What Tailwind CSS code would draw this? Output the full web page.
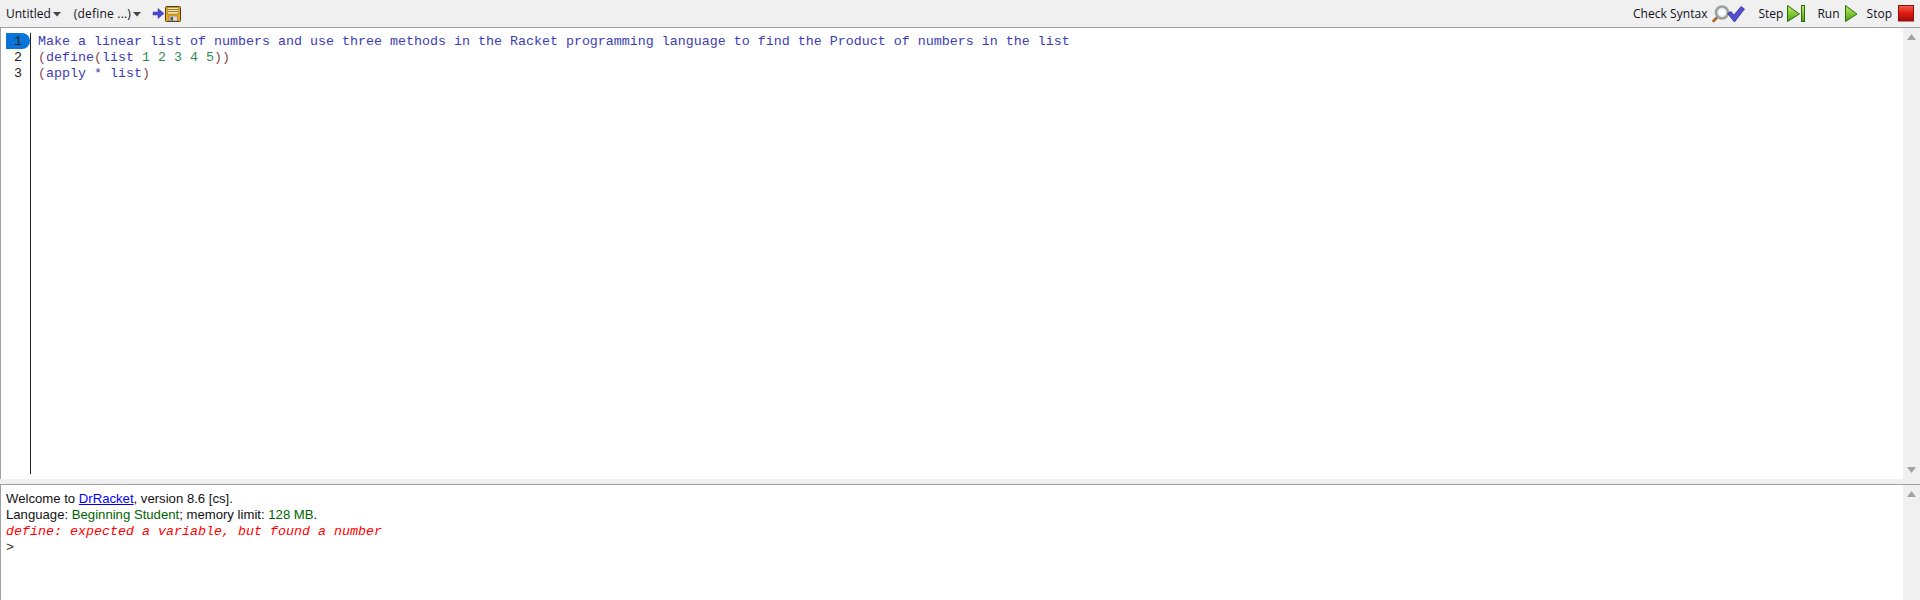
<!doctype html>
<html>
<head>
<meta charset="utf-8">
<script src="https://cdn.jsdelivr.net/npm/@tailwindcss/browser@4"></script>
</head>
<body class="m-0 bg-[#f0f0f0]">
<div class="w-[1920px] h-[600px] overflow-hidden flex flex-col bg-[#f0f0f0] text-black">
  <!-- toolbar -->
  <div class="h-[27px] flex items-center justify-between shrink-0 font-['Open_Sans',sans-serif] text-[12px] text-[#10101c]">
    <div class="flex items-center pl-[6px]">
      <span>Untitled</span>
      <svg class="ml-[2px] mt-[1px]" width="9" height="5" viewBox="0 0 9 5"><path d="M0 0H8L4 4.500Z" fill="#444"/></svg>
      <span class="ml-[12px] tracking-[0.2px]">(define ...)</span>
      <svg class="ml-[2px] mt-[1px]" width="9" height="5" viewBox="0 0 9 5"><path d="M0 0H8L4 4.500Z" fill="#444"/></svg>
      <svg class="ml-[10px]" width="30" height="18" viewBox="0 0 30 18">
        <path d="M1 7H6V3.500L12 8.500L6 13.500V10H1Z" fill="#4a4ad0" stroke="#3030a0" stroke-width=".5"/>
        <rect x="13.500" y="1.500" width="15" height="15" rx="1" fill="#e8a820" stroke="#5a3c08"/>
        <rect x="15.500" y="2.500" width="11" height="6.500" fill="#f6e4a8" stroke="#8a6a20" stroke-width=".5"/>
        <path d="M16 4.500H26M16 6.500H26" stroke="#9a7a30" stroke-width="1"/>
        <rect x="17" y="11" width="8.500" height="5" fill="#d8d8d8" stroke="#706040" stroke-width=".5"/>
        <rect x="18.500" y="12" width="2.500" height="3.500" fill="#555"/>
      </svg>
    </div>
    <div class="flex items-center pr-[6px]">
      <span class="tracking-[0.05px]">Check Syntax</span>
      <svg class="ml-[4px]" width="33" height="18" viewBox="0 0 33 18">
        <path d="M5 12.500L1.500 16" stroke="#b06020" stroke-width="2.500" stroke-linecap="round"/>
        <circle cx="10" cy="7.500" r="6" fill="#e8ecec" stroke="#9aa09e" stroke-width="2.500"/>
        <circle cx="10" cy="7.500" r="3" fill="#fff"/>
        <path d="M15.500 8.500L19 6.500L22 10L29 1.500L32.500 4L22.500 17Z" fill="#5050d0" stroke="#2a2a80" stroke-width=".7"/>
      </svg>
      <span class="ml-[14px]">Step</span>
      <svg class="ml-[4px]" width="18" height="18" viewBox="0 0 18 18">
        <defs><linearGradient id="g1" x1="0" y1="0" x2="0" y2="1"><stop offset="0" stop-color="#b8f060"/><stop offset="1" stop-color="#4ea010"/></linearGradient></defs>
        <path d="M.5 .5L12.500 9L.5 16.500Z" fill="url(#g1)" stroke="#2e6a10"/>
        <rect x="14.500" y=".5" width="3" height="16" fill="url(#g1)" stroke="#2e6a10"/>
      </svg>
      <span class="ml-[12px]">Run</span>
      <svg class="ml-[5px]" width="13" height="18" viewBox="0 0 13 18">
        <path d="M.5 .5L12 9L.5 16.500Z" fill="url(#g1)" stroke="#2e6a10"/>
      </svg>
      <span class="ml-[9px]">Stop</span>
      <svg class="ml-[6px]" width="16" height="18" viewBox="0 0 16 18">
        <defs><linearGradient id="g2" x1="0" y1="0" x2="0" y2="1"><stop offset="0" stop-color="#f06050"/><stop offset=".5" stop-color="#e01810"/><stop offset="1" stop-color="#a00c08"/></linearGradient></defs>
        <rect x=".5" y=".5" width="15" height="15.500" fill="url(#g2)" stroke="#8a1008"/>
      </svg>
    </div>
  </div>
  <div class="h-[1px] bg-[#a0a0a0] shrink-0"></div>

  <!-- definitions -->
  <div class="h-[451px] shrink-0 flex bg-white border-l border-[#a0a0a0]">
    <div class="w-[30px] shrink-0 border-r border-[#222] mt-[5px] mb-[5px] flex flex-col items-end font-['Liberation_Mono',monospace] text-[13.33px] leading-[18px] text-[#222]">
      <div class="w-[24px] h-[16px] bg-[#0a74d8] rounded-r-[8px] text-right pr-[8px]">1</div>
      <div class="h-[16px] pr-[8px]">2</div>
      <div class="h-[16px] pr-[8px]">3</div>
    </div>
    <div class="flex-1 pl-[7px] pt-[6px] font-['Liberation_Mono',monospace] text-[13.33px] leading-[16px] text-[#3c3cb4]">
      <div class="whitespace-pre">Make a linear list of numbers and use three methods in the Racket programming language to find the Product of numbers in the list</div>
      <div class="whitespace-pre"><span class="text-[#8e4b4b]">(</span>define<span class="text-[#8e4b4b]">(</span>list <span class="text-[#2e8b57]">1</span> <span class="text-[#2e8b57]">2</span> <span class="text-[#2e8b57]">3</span> <span class="text-[#2e8b57]">4</span> <span class="text-[#2e8b57]">5</span><span class="text-[#8e4b4b]">))</span></div>
      <div class="whitespace-pre"><span class="text-[#8e4b4b]">(</span>apply * list<span class="text-[#8e4b4b]">)</span></div>
    </div>
    <div class="w-[17px] shrink-0 bg-[#f0f0f0] flex flex-col justify-between items-center py-[6px]">
      <svg width="9" height="6" viewBox="0 0 9 6"><path d="M4.500 0L9 6H0Z" fill="#a3a3a3"/></svg>
      <svg width="9" height="6" viewBox="0 0 9 6"><path d="M0 0H9L4.500 6Z" fill="#a3a3a3"/></svg>
    </div>
  </div>

  <div class="h-[5px] shrink-0 bg-[#f0f0f0]"></div>
  <div class="h-[1px] bg-[#a0a0a0] shrink-0"></div>

  <!-- interactions -->
  <div class="flex-1 flex bg-white border-l border-[#a0a0a0]">
    <div class="flex-1 pl-[5px] pt-[6px] font-['Liberation_Sans',sans-serif] text-[13.15px] leading-[16px] text-[#111]">
      <div>Welcome to <span class="text-[#0000ff] underline">DrRacket</span>, version 8.6 [cs].</div>
      <div>Language: <span class="text-[#006400]">Beginning Student</span>; memory limit: <span class="text-[#006400]">128 MB</span>.</div>
      <div class="mt-[1px] font-['Liberation_Mono',monospace] text-[13.33px] italic text-[#ff0000]">define: expected a variable, but found a number</div>
      <div class="font-['Liberation_Mono',monospace] text-[13.33px] text-[#333]">&gt;</div>
    </div>
    <div class="w-[17px] shrink-0 bg-[#f0f0f0] flex flex-col items-center pt-[6px]">
      <svg width="9" height="6" viewBox="0 0 9 6"><path d="M4.500 0L9 6H0Z" fill="#a3a3a3"/></svg>
    </div>
  </div>
</div>
</body>
</html>
